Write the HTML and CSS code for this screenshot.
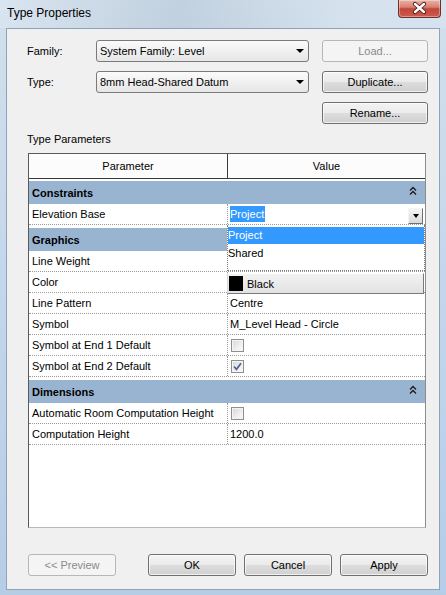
FILE: index.html
```html
<!DOCTYPE html>
<html>
<head>
<meta charset="utf-8">
<link rel="stylesheet" href="styles.css">
</head>
<body>
<div class="window">
  <div class="titlebar">
    <span class="title">Type Properties</span>
    <div class="close">
      <svg width="41" height="17" viewBox="0 0 41 17">
        <path d="M16 4 L25 12 M25 4 L16 12" stroke="#4a1712" stroke-width="4.2" stroke-linecap="round" fill="none"/>
        <path d="M16 4 L25 12 M25 4 L16 12" stroke="#ffffff" stroke-width="2.4" stroke-linecap="round" fill="none"/>
      </svg>
    </div>
  </div>
  <div class="panel">
    <div class="frow">
      <span class="flabel">Family:</span>
      <div class="combo"><span>System Family: Level</span><span class="tri"></span></div>
      <button class="btn disabled">Load...</button>
    </div>
    <div class="frow">
      <span class="flabel">Type:</span>
      <div class="combo"><span>8mm Head-Shared Datum</span><span class="tri"></span></div>
      <button class="btn">Duplicate...</button>
    </div>
    <div class="frow">
      <button class="btn indent">Rename...</button>
    </div>
    <div class="section-label">Type Parameters</div>
    <div class="ptable">
      <div class="thead">
        <div class="th first">Parameter</div>
        <div class="th">Value</div>
      </div>

      <div class="ghead top"><span>Constraints</span>
        <svg class="chev" width="8" height="9" viewBox="0 0 8 9"><path d="M1 4.5 L4 1.5 L7 4.5 M1 8.5 L4 5.5 L7 8.5" stroke="#1a1a1a" stroke-width="1.3" fill="none"/></svg>
      </div>
      <div class="row">
        <div class="p">Elevation Base</div>
        <div class="v elev"><span class="hl">Project</span><span class="ddbtn"><span class="tri"></span></span></div>
      </div>

      <div class="ghead"><span>Graphics</span>
        <svg class="chev" width="8" height="9" viewBox="0 0 8 9"><path d="M1 4.5 L4 1.5 L7 4.5 M1 8.5 L4 5.5 L7 8.5" stroke="#1a1a1a" stroke-width="1.3" fill="none"/></svg>
      </div>
      <div class="row"><div class="p">Line Weight</div><div class="v"></div></div>
      <div class="row"><div class="p">Color</div><div class="v cbtn-cell"><div class="colorbtn"><span class="swatch"></span><span>Black</span></div></div></div>
      <div class="row"><div class="p">Line Pattern</div><div class="v">Centre</div></div>
      <div class="row"><div class="p">Symbol</div><div class="v">M_Level Head - Circle</div></div>
      <div class="row"><div class="p">Symbol at End 1 Default</div><div class="v"><span class="cb"></span></div></div>
      <div class="row"><div class="p">Symbol at End 2 Default</div><div class="v"><span class="cb"><svg width="11" height="11" viewBox="0 0 11 11"><path d="M2 5.5 L4.5 8.3 L9 2.3" stroke="#4d6197" stroke-width="1.7" fill="none"/></svg></span></div></div>

      <div class="ghead"><span>Dimensions</span>
        <svg class="chev" width="8" height="9" viewBox="0 0 8 9"><path d="M1 4.5 L4 1.5 L7 4.5 M1 8.5 L4 5.5 L7 8.5" stroke="#1a1a1a" stroke-width="1.3" fill="none"/></svg>
      </div>
      <div class="row"><div class="p">Automatic Room Computation Height</div><div class="v"><span class="cb"></span></div></div>
      <div class="row"><div class="p">Computation Height</div><div class="v">1200.0</div></div>

      <div class="dropdown">
        <div class="opt sel">Project</div>
        <div class="opt">Shared</div>
      </div>
    </div>
    <div class="footer">
      <button class="btn small disabled">&lt;&lt; Preview</button>
      <button class="btn small ok">OK</button>
      <button class="btn small">Cancel</button>
      <button class="btn small">Apply</button>
    </div>
  </div>
</div>
</body>
</html>
```

FILE: styles.css
```css
* { box-sizing: border-box; }
html, body { margin: 0; padding: 0; }
body {
  width: 446px;
  height: 595px;
  overflow: hidden;
  font-family: "Liberation Sans", Arial, sans-serif;
  font-size: 11px;
  color: #000;
}
.window {
  width: 446px;
  height: 595px;
  background: linear-gradient(180deg, #d2e0ed 0%, #c3d6ea 50%, #b6cde6 100%);
  display: flex;
  flex-direction: column;
}
.titlebar {
  height: 28px;
  display: flex;
  justify-content: space-between;
  align-items: flex-start;
  padding: 0 5px 0 7px;
  background: linear-gradient(90deg, rgba(255,255,255,0.15), rgba(120,140,160,0.18) 40%, rgba(255,255,255,0.1) 80%);
}
.title {
  margin-top: 6px;
  line-height: 15px;
  font-size: 12px;
  color: #000;
}
.close {
  width: 43px;
  height: 18px;
  border: 1px solid #6e3029;
  border-top: none;
  border-radius: 0 0 4px 4px;
  background: linear-gradient(180deg, #eab3a8 0%, #d8806f 42%, #c2453a 52%, #cc5c4e 100%);
  box-shadow: inset 0 0 0 1px rgba(255,255,255,0.35);
  display: flex;
  align-items: center;
  justify-content: center;
}
.close svg { display: block; }
.panel {
  margin-left: 6px;
  width: 434px;
  height: 562px;
  border: 1px solid #8ea2b8;
  background: #f0f0f0;
  padding: 11px 0 0 20px;
  display: flex;
  flex-direction: column;
}
.frow {
  display: flex;
  align-items: center;
  height: 22px;
}
.frow + .frow { margin-top: 9px; }
.flabel { width: 69px; }
.combo {
  width: 213px;
  height: 22px;
  border: 1px solid #7a7a7a;
  border-radius: 3px;
  background: linear-gradient(180deg, #fbfbfb 0%, #f0f0f0 50%, #e6e6e6 100%);
  display: flex;
  align-items: center;
  justify-content: space-between;
  padding: 0 4px 0 3px;
  margin-right: 13px;
}
.tri {
  width: 0;
  height: 0;
  border-left: 4px solid transparent;
  border-right: 4px solid transparent;
  border-top: 4px solid #000;
}
.btn {
  font-family: inherit;
  font-size: 11px;
  color: #000;
  width: 106px;
  height: 22px;
  padding: 0;
  border: 1px solid #707070;
  border-radius: 3px;
  background: linear-gradient(180deg, #f3f3f3 0%, #ebebeb 49%, #dddddd 50%, #d0d0d0 100%);
  box-shadow: inset 0 0 0 1px rgba(255,255,255,0.7);
}
.btn.disabled {
  border-color: #b4b8bb;
  background: #f4f4f4;
  color: #8a8a8a;
  box-shadow: none;
}
.btn.indent { margin-left: 295px; }
.section-label {
  margin-top: 8px;
  line-height: 15px;
}
.ptable {
  position: relative;
  margin-top: 6px;
  margin-left: 1px;
  width: 398px;
  height: 375px;
  background: #fff;
  border: 1px solid;
  border-color: #5a5a5a #8c8c8c #b9b9b9 #5a5a5a;
}
.thead {
  display: grid;
  grid-template-columns: 199px 197px;
  height: 25px;
  border-bottom: 1px solid #3a3a3a;
  background: #fcfcfc;
}
.th {
  text-align: center;
  line-height: 24px;
}
.th.first { border-right: 1px solid #3a3a3a; }
.ghead {
  height: 26px;
  border-top: 3px solid #fff;
  background: #99b4d1;
  background-clip: padding-box;
  display: flex;
  align-items: center;
  justify-content: space-between;
  padding: 0 8px 0 3px;
  font-weight: bold;
}
.ghead.top {
  height: 25px;
  border-top-width: 2px;
}
.chev { display: block; margin-top: -4px; }
.row {
  display: grid;
  grid-template-columns: 199px 197px;
  height: 21px;
  border-bottom: 1px dotted #9a9a9a;
}
.p {
  border-right: 1px dotted #9a9a9a;
  padding-left: 3px;
  line-height: 20px;
  white-space: nowrap;
  overflow: hidden;
}
.v {
  padding-left: 2px;
  line-height: 20px;
  display: flex;
  align-items: center;
}
.v.elev {
  justify-content: space-between;
  padding-right: 2px;
}
.hl {
  background: #3399ff;
  color: #fff;
  line-height: 16px;
  padding: 0 1px 0 0;
}
.ddbtn {
  width: 15px;
  height: 16px;
  margin-top: 3px;
  border: 1px solid;
  border-color: #f4f4f4 #707070 #707070 #f4f4f4;
  background: linear-gradient(180deg, #f4f4f4, #d9d9d9);
  display: flex;
  align-items: center;
  justify-content: center;
}
.ddbtn .tri {
  border-left-width: 3.5px;
  border-right-width: 3.5px;
  border-top-width: 4px;
}
.v.cbtn-cell { padding: 0; }
.colorbtn {
  margin-left: -1px;
  width: 197px;
  height: 21px;
  margin-top: 1px;
  border: 1px solid;
  border-color: #ffffff #7a7a7a #7a7a7a #d8d8d8;
  background: linear-gradient(180deg, #f2f2f2, #e2e2e2);
  display: flex;
  align-items: center;
  padding-left: 1px;
  gap: 4px;
}
.swatch {
  width: 14px;
  height: 15px;
  background: #000;
}
.cb {
  width: 13px;
  height: 13px;
  margin-left: 1px;
  border: 1px solid #8e8f8f;
  background: linear-gradient(135deg, #d6d6d6 0%, #efefef 60%, #fbfbfb 100%);
  box-shadow: inset 0 0 0 1px #f4f4f4;
  display: flex;
  align-items: center;
  justify-content: center;
}
.cb svg { display: block; }
.dropdown {
  position: absolute;
  left: 198px;
  top: 71px;
  width: 198px;
  height: 46px;
  background: #fff;
  border: 1px dotted #7d7d7d;
  border-top: none;
  padding-top: 2px;
}
.opt {
  height: 17px;
  line-height: 17px;
  padding-left: 0;
}
.opt + .opt { margin-top: 1px; }
.opt.sel {
  background: #3399ff;
  color: #fff;
}
.footer {
  display: flex;
  margin-top: 26px;
  margin-left: 1px;
  gap: 8px;
}
.btn.small { width: 88px; }
.btn.ok { margin-left: 24px; }
```
